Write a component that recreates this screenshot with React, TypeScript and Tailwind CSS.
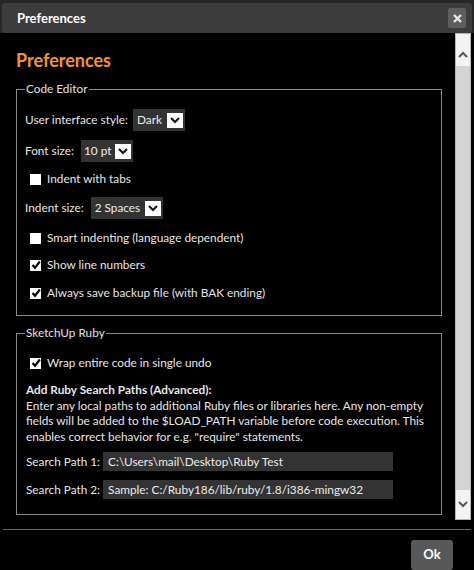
import React from "react";

const Chevron = ({ up = false, className = "" }: { up?: boolean; className?: string }) => (
    <svg width="10" height="7" viewBox="0 0 10 7" className={className}>
        <path
            d={up ? "M1 6 L5 2 L9 6" : "M1 1 L5 5 L9 1"}
            fill="none"
            stroke="currentColor"
            strokeWidth="2"
        />
    </svg>
);

const Select = ({ value, pl = "pl-[4px]", gap = "gap-[5px]" }: { value: string; pl?: string; gap?: string }) => (
    <div className={`inline-flex items-center h-[22px] bg-[#333333] pr-[2px] ${pl} ${gap}`}>
        <span className="text-[#ececec]">{value}</span>
        <span className="w-[16px] h-[15px] bg-white flex items-center justify-center text-[#111]">
            <Chevron />
        </span>
    </div>
);

const Checkbox = ({ checked, label }: { checked: boolean; label: string }) => (
    <label className="flex items-center h-[22px] pl-[5px] gap-[6px]">
        <span className="w-[11px] h-[11px] bg-white flex items-center justify-center">
            {checked && (
                <svg width="10" height="10" viewBox="0 0 10 10">
                    <path d="M1.5 5 L4 7.8 L8.8 1.5" fill="none" stroke="#000" strokeWidth="2.2" />
                </svg>
            )}
        </span>
        <span>{label}</span>
    </label>
);

const PathInput = ({ label, value }: { label: string; value: string }) => (
    <div className="flex items-center gap-[3px] pl-[1px]">
        <span>{label}</span>
        <div className="w-[290px] h-[19px] bg-[#333333] pl-[5px] flex items-center text-[#ececec]">{value}</div>
    </div>
);

export default function App() {
    return (
        <div className="w-[474px] h-[570px] bg-black flex flex-col overflow-hidden font-['Lato',sans-serif] text-[11.8px] text-[#e6e6e6] leading-[16px]">
            {/* title bar */}
            <div className="bg-[#262626] pt-[3px] px-[2px]">
                <div className="h-[30px] bg-[#3c3c3c] rounded-[3px] flex items-center justify-between pl-[15px] pr-[6px]">
                    <span className="text-white font-bold text-[13px]">Preferences</span>
                    <button className="w-[18px] h-[20px] bg-[#5e5e5e] rounded-[2px] flex items-center justify-center">
                        <svg width="9" height="9" viewBox="0 0 9 9">
                            <path d="M1 1 L8 8 M8 1 L1 8" stroke="#e8e8e8" strokeWidth="2.4" />
                        </svg>
                    </button>
                </div>
            </div>

            <div className="flex h-[489px]">
                <div className="flex-1 pl-[16px] pr-[13px]">
                    <h1 className="mt-[15px] text-[18px] leading-[24px] font-bold text-[#f4952f]">Preferences</h1>

                    <fieldset className="mt-[9px] border border-[#8a8a8a] px-[8px] pb-[11px]">
                        <legend className="px-[1px] text-[#e0e0e0]">Code Editor</legend>
                        <div className="mt-[12px] flex items-center h-[22px] gap-[5px]">
                            <span>User interface style:</span>
                            <Select value="Dark" />
                        </div>
                        <div className="mt-[9px] flex items-center h-[22px] gap-[7px]">
                            <span>Font size:</span>
                            <Select value="10 pt" pl="pl-[3px]" gap="gap-[4px]" />
                        </div>
                        <div className="mt-[6px]">
                            <Checkbox checked={false} label="Indent with tabs" />
                        </div>
                        <div className="mt-[7px] flex items-center h-[22px] gap-[7px]">
                            <span>Indent size:</span>
                            <Select value="2 Spaces" />
                        </div>
                        <div className="mt-[8px]">
                            <Checkbox checked={false} label="Smart indenting (language dependent)" />
                        </div>
                        <div className="mt-[5px]">
                            <Checkbox checked={true} label="Show line numbers" />
                        </div>
                        <div className="mt-[6px]">
                            <Checkbox checked={true} label="Always save backup file (with BAK ending)" />
                        </div>
                    </fieldset>

                    <fieldset className="mt-[9px] border border-[#8a8a8a] px-[8px] pb-[15px]">
                        <legend className="px-[1px] text-[#e0e0e0]">SketchUp Ruby</legend>
                        <div className="mt-[11px]">
                            <Checkbox checked={true} label="Wrap entire code in single undo" />
                        </div>
                        <div className="mt-[8px] pl-[1px] leading-[15.5px]">
                            <div className="font-bold">Add Ruby Search Paths (Advanced):</div>
                            <p className="whitespace-nowrap">
                                Enter any local paths to additional Ruby files or libraries here. Any non-empty<br />
                                fields will be added to the $LOAD_PATH variable before code execution. This<br />
                                enables correct behavior for e.g. "require" statements.
                            </p>
                        </div>
                        <div className="mt-[8px]">
                            <PathInput label="Search Path 1:" value="C:\Users\mail\Desktop\Ruby Test" />
                        </div>
                        <div className="mt-[9px]">
                            <PathInput label="Search Path 2:" value="Sample: C:/Ruby186/lib/ruby/1.8/i386-mingw32" />
                        </div>
                    </fieldset>
                </div>

                {/* scrollbar */}
                <div className="w-[16px] mr-[3px] flex flex-col border border-[#b5b5b5]">
                    <div className="h-[32px] bg-[#f3f3f3] flex items-end justify-center pb-[8px] text-[#555]">
                        <Chevron up />
                    </div>
                    <div className="flex-1 bg-[#d4d4d4]" />
                    <div className="h-[29px] bg-[#f3f3f3] flex items-center justify-center text-[#555]">
                        <Chevron />
                    </div>
                </div>
            </div>

            <div className="mt-[9px] mx-[3px] h-px bg-[#6a6a6a]" />
            <div className="flex justify-end pr-[21px] mt-[10px]">
                <button className="w-[42px] h-[30px] bg-[#585858] rounded-[3px] text-white font-bold text-[13px] pb-[2px]">
                    Ok
                </button>
            </div>
        </div>
    );
}
